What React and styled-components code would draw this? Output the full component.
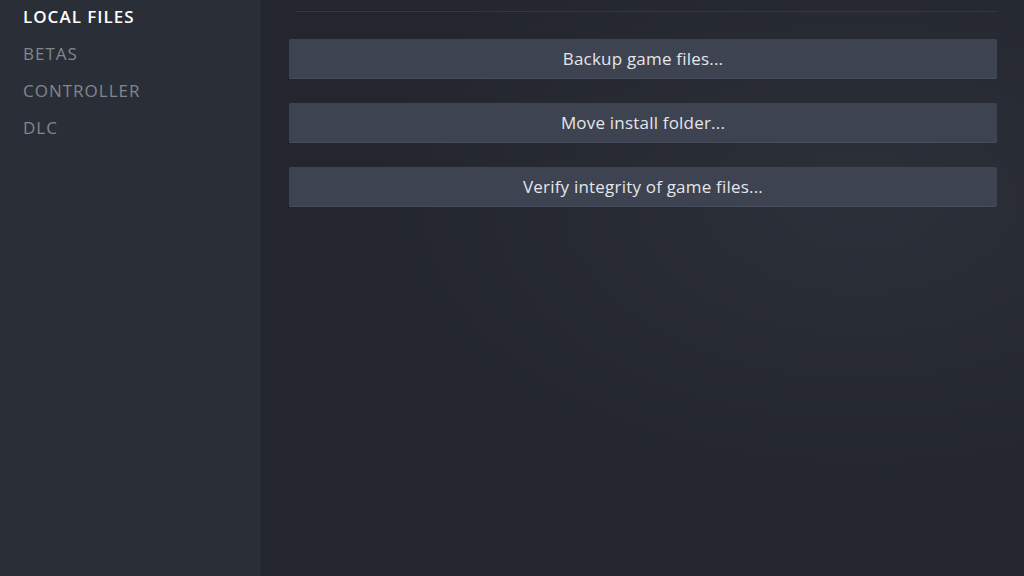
import React from "react";
import styled, { createGlobalStyle } from "styled-components";

const GlobalStyle = createGlobalStyle`
  html, body {
    margin: 0;
    padding: 0;
    background: #23262e;
  }
  * {
    box-sizing: border-box;
  }
`;

const Page = styled.div`
  display: flex;
  width: 1024px;
  height: 576px;
  overflow: hidden;
  font-family: "Open Sans", "Liberation Sans", sans-serif;
  background: #23262e;
`;

const Sidebar = styled.nav`
  width: 260px;
  flex-shrink: 0;
  display: flex;
  flex-direction: column;
  gap: 15px;
  padding: 6px 0 0 23px;
  background: #2a2e37;
  border-right: 1px solid #2e323b;
`;

const NavItem = styled.div`
  font-size: 17px;
  line-height: 22px;
  font-weight: ${p => (p.active ? 600 : 400)};
  color: ${p => (p.active ? "#ffffff" : "#82868d")};
  text-transform: uppercase;
  letter-spacing: 1px;
`;

const Main = styled.main`
  flex: 1;
  display: flex;
  flex-direction: column;
  gap: 24px;
  padding: 11px 27px 0 29px;
  background: radial-gradient(
      ellipse 500px 300px at 600px 200px,
      rgba(60, 66, 78, 0.35),
      transparent
    ),
    #23262e;
`;

const Divider = styled.div`
  height: 1px;
  margin: 0 0 3px 6px;
  background: #343843;
`;

const ActionButton = styled.button`
  height: 40px;
  width: 100%;
  border: none;
  border-radius: 2px;
  padding: 0 0 1px;
  background: #3d4350;
  color: #e4e6e9;
  font-family: inherit;
  font-size: 17px;
  letter-spacing: 0.2px;
  cursor: pointer;
  box-shadow: inset 0 -1px 0 #464c59;

  &:hover {
    background: #464c5a;
  }
`;

const sections = ["Local files", "Betas", "Controller", "DLC"];

const actions = [
  "Backup game files...",
  "Move install folder...",
  "Verify integrity of game files..."
];

export default function App() {
  return (
    <>
      <GlobalStyle />
      <Page>
        <Sidebar>
          {sections.map((s, i) => (
            <NavItem key={s} active={i === 0}>
              {s}
            </NavItem>
          ))}
        </Sidebar>
        <Main>
          <Divider />
          {actions.map(a => (
            <ActionButton key={a}>{a}</ActionButton>
          ))}
        </Main>
      </Page>
    </>
  );
}
